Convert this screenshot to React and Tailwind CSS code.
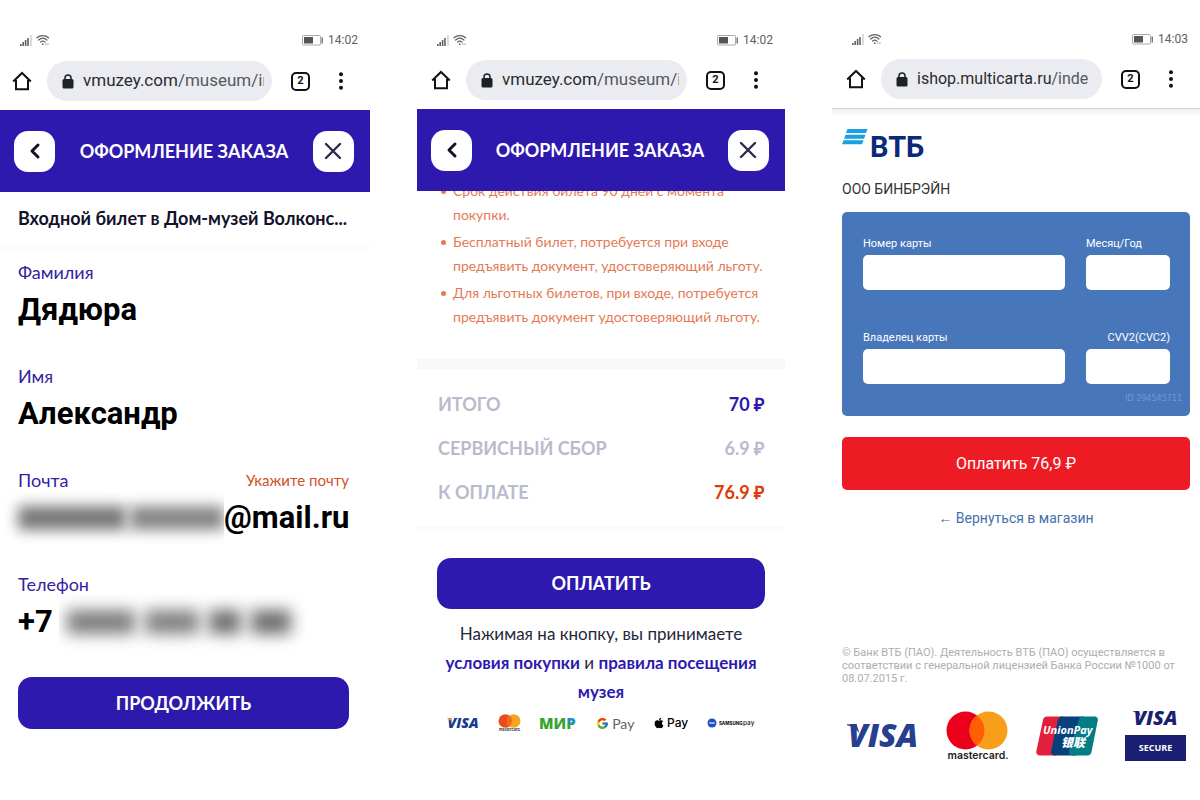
import { FaApple } from "react-icons/fa";
import { FcGoogle } from "react-icons/fc";

const museumFont = "font-['Lato','Open_Sans',sans-serif]";

/* ---------- browser chrome ---------- */

function StatusBar({ time }) {
  return (
    <div className="flex h-5 items-center justify-between pr-3 pl-5 text-[#5f6063]">
      <div className="flex items-center gap-1">
        <svg width="12" height="11" viewBox="0 0 12 11" fill="currentColor" aria-hidden="true">
          <rect x="0" y="9" width="1.6" height="2" />
          <rect x="2.400" y="7" width="1.6" height="4" />
          <rect x="4.800" y="5" width="1.6" height="6" />
          <rect x="7.200" y="3" width="1.6" height="8" />
          <rect x="10.500" y="0" width="1" height="11" opacity="0.45" />
        </svg>
        <svg width="14" height="12" viewBox="0 0 15 12" fill="none" stroke="currentColor" strokeWidth="1.3" strokeLinecap="round" aria-hidden="true">
          <path d="M1 3.600C4.500 0.400 10 0.400 13.500 3.600" />
          <path d="M2.800 6C5.500 3.600 9 3.600 11.700 6" />
          <path d="M4.800 8.300C6.200 7 8.300 7 9.700 8.300" />
          <circle cx="7.200" cy="10.500" r="0.900" fill="currentColor" stroke="none" />
          <path d="M10.500 10.300h.1M12.800 10.300h.1" />
        </svg>
      </div>
      <div className="flex items-center gap-1">
        <svg width="22" height="11" viewBox="0 0 22 11" aria-hidden="true">
          <rect x="0.500" y="0.500" width="18" height="9.500" rx="1" fill="none" stroke="#a9a9ab" />
          <rect x="2" y="2" width="9" height="6.500" fill="#555" />
          <rect x="19.500" y="2.500" width="1.500" height="6" fill="#777" />
        </svg>
        <span className="text-[12px]">{time}</span>
      </div>
    </div>
  );
}

function AddressBar({ host, path, className, textClass }) {
  return (
    <div className={`flex items-center pr-[27px] pb-[9px] ${className}`}>
      <button type="button" aria-label="Домой" className="shrink-0">
        <svg width="20" height="20" viewBox="0 0 20 20" fill="none" stroke="#111" strokeWidth="2" aria-hidden="true">
          <path d="M1.200 10.500 10 2l8.800 8.500M4 9v9.200h12V9" />
        </svg>
      </button>
      <div className="ml-[15px] flex h-10 min-w-0 flex-1 items-center gap-[9px] rounded-full bg-[#ebecf1] pr-2 pl-[15px]">
        <svg width="12" height="15" viewBox="0 0 12 15" className="shrink-0" aria-hidden="true">
          <path d="M3 6V4a3 3 0 0 1 6 0v2" fill="none" stroke="#202124" strokeWidth="1.500" />
          <rect x="0.500" y="5" width="11" height="9.500" rx="1.500" fill="#202124" />
        </svg>
        <span className={`min-w-0 flex-1 overflow-hidden whitespace-nowrap text-[#2a2b2e] ${textClass}`}>
          {host}
          <span className="text-[#56585c]">{path}</span>
        </span>
      </div>
      <button
        type="button"
        aria-label="Вкладки"
        className="ml-[19px] flex h-[19px] w-[19px] shrink-0 items-center justify-center rounded-[5px] border-2 border-[#111] text-[11px] font-bold text-[#111]"
      >
        2
      </button>
      <button type="button" aria-label="Меню" className="ml-[29px] shrink-0">
        <svg width="4" height="18" viewBox="0 0 4 18" fill="#111" aria-hidden="true">
          <circle cx="2" cy="2.200" r="2" />
          <circle cx="2" cy="9" r="2" />
          <circle cx="2" cy="15.800" r="2" />
        </svg>
      </button>
    </div>
  );
}

function OrderHeader() {
  return (
    <header className="flex h-[82px] items-center justify-between bg-[#2d19ad] pr-4 pl-[14px]">
      <button type="button" aria-label="Назад" className="flex h-[41px] w-[41px] items-center justify-center rounded-[14px] bg-white">
        <svg width="12" height="18" viewBox="0 0 12 18" fill="none" stroke="#12122b" strokeWidth="3" strokeLinecap="round" strokeLinejoin="round" aria-hidden="true">
          <path d="M9 3 3 9l6 6" />
        </svg>
      </button>
      <h1 className="text-[18px] font-bold text-white">ОФОРМЛЕНИЕ ЗАКАЗА</h1>
      <button type="button" aria-label="Закрыть" className="flex h-[41px] w-[41px] items-center justify-center rounded-[14px] bg-white">
        <svg width="18" height="18" viewBox="0 0 18 18" fill="none" stroke="#2b2b4b" strokeWidth="2.400" strokeLinecap="round" aria-hidden="true">
          <path d="M2 2l14 14M16 2 2 16" />
        </svg>
      </button>
    </header>
  );
}

/* ---------- payment logos ---------- */

function Visa({ width, height, fill, accent }) {
  return (
    <svg width={width} height={height} viewBox="0 0 72 24" role="img" aria-label="Visa">
      <text x="1" y="23" fontSize="32" fontWeight="800" fontStyle="italic" fill={fill} className="font-['Open_Sans',sans-serif]">
        VISA
      </text>
      <path d="M0 0.200h9.500l3 9C9 4.500 5 2 0 1.200Z" fill={accent || fill} />
    </svg>
  );
}

function Mastercard({ width, height, left, overlap, right }) {
  return (
    <svg width={width} height={height} viewBox="0 0 62 50" role="img" aria-label="Mastercard">
      <circle cx="19.500" cy="19.500" r="19" fill={left} />
      <circle cx="42.500" cy="19.500" r="19" fill={right} />
      <path d="M31 4.400a19 19 0 0 1 0 30.200a19 19 0 0 1 0-30.200Z" fill={overlap} />
      <text x="32" y="48" fontSize="10.500" fontWeight="600" textAnchor="middle" fill="#222" className="font-['Inter',sans-serif]">
        mastercard.
      </text>
    </svg>
  );
}

function Mir() {
  return (
    <svg width="38" height="14" viewBox="0 0 38 14" role="img" aria-label="Мир">
      <defs>
        <linearGradient id="mirTop" x1="0" x2="0" y1="0" y2="1">
          <stop offset="0.480" stopColor="#1c8fd0" />
          <stop offset="0.580" stopColor="#35a42f" />
        </linearGradient>
      </defs>
      <text x="0" y="12.500" fontSize="15" fontWeight="800" fill="#35a42f" className="font-['Open_Sans',sans-serif]">
        МИ
        <tspan fill="url(#mirTop)">Р</tspan>
      </text>
    </svg>
  );
}

function SamsungPay() {
  return (
    <svg width="49" height="10" viewBox="0 0 98 20" role="img" aria-label="Samsung Pay">
      <circle cx="10" cy="10" r="9" fill="#1f4fc4" />
      <path d="M4.600 8.400h10.800v3.200H4.600z" fill="#b9cbf5" />
      <text x="24" y="13" fontSize="9" fontWeight="800" fill="#222" className="font-['Inter',sans-serif]">
        SAMSUNG
      </text>
      <text x="72" y="13" fontSize="13" fontWeight="500" fill="#222" className="font-['Inter',sans-serif]">
        pay
      </text>
    </svg>
  );
}

function UnionPay() {
  return (
    <svg width="62" height="40" viewBox="0 0 62 40" role="img" aria-label="UnionPay">
      <path d="M11 0.500h16L20 39.500H4a3.500 3.500 0 0 1-3.600-4.500L7 4A4.500 4.500 0 0 1 11 .5Z" fill="#e2203c" />
      <path d="M26 .5h22L40 39.500H18.500a3.500 3.500 0 0 1-3.400-4.500L21.800 4A4.500 4.500 0 0 1 26 .5Z" fill="#07407c" />
      <path d="M47 .5h11.500a3.200 3.200 0 0 1 3.200 4.300L55.500 36a4.500 4.500 0 0 1-4 3.500H36a3.500 3.500 0 0 1-3-4.500L42.600 4A4.500 4.500 0 0 1 47 .5Z" fill="#027d83" />
      <text x="7" y="18" fontSize="11" fontWeight="700" fontStyle="italic" fill="#fff" className="font-['Open_Sans',sans-serif]">
        UnionPay
      </text>
      <text x="25" y="31" fontSize="12" fontWeight="900" fontStyle="italic" fill="#fff" className="font-['Noto_Sans_CJK_SC',sans-serif]">
        银联
      </text>
    </svg>
  );
}

function VtbLogo() {
  return (
    <svg width="84" height="34" viewBox="0 0 84 34" role="img" aria-label="ВТБ">
      <g fill="#1a9fe0">
        <path d="M5.500 1H25.500l-1.500 4H4z" />
        <path d="M3.500 6.700h20l-1.500 4H2z" />
        <path d="M1.500 12.300h20l-1.500 4H0z" />
      </g>
      <text x="28" y="29" fontSize="29" fontWeight="700" fill="#0b2a78" className="font-['Roboto',sans-serif]">
        ВТБ
      </text>
    </svg>
  );
}

/* ---------- screen 1: buyer details ---------- */

const inputStyle = "h-10 min-w-0 flex-1 bg-transparent font-['Roboto',sans-serif] text-[31px] font-bold text-black outline-none";

function Field({ id, label, error, children }) {
  return (
    <div>
      <div className="flex h-6 items-center justify-between">
        <label htmlFor={id} className="text-[18px] text-[#33229f]">{label}</label>
        {error && <span className="text-[15px] text-[#cf5325]">{error}</span>}
      </div>
      <div className="mt-[6px] flex h-10 items-center">{children}</div>
    </div>
  );
}

function DetailsScreen() {
  return (
    <section className="min-w-0">
      <div className="pt-[30px]">
        <StatusBar time="14:02" />
      </div>
      <AddressBar host="vmuzey.com" path="/museum/in" className="pt-[11px] pl-3" textClass="text-[17px]" />
      <div className={museumFont}>
        <OrderHeader />
        <h2 className="flex h-[52px] items-center px-[18px] text-[18px] font-bold text-[#12122b]">
          Входной билет в Дом-музей Волконс...
        </h2>
        <div className="h-[6px] bg-[#fcfcfc]" />
        <form className="pt-[10px] pr-[21px] pl-[18px]">
          <div className="flex flex-col gap-[34px]">
            <Field id="surname" label="Фамилия">
              <input id="surname" defaultValue="Дядюра" className={inputStyle} />
            </Field>
            <Field id="name" label="Имя">
              <input id="name" defaultValue="Александр" className={inputStyle} />
            </Field>
            <Field id="email" label="Почта" error="Укажите почту">
              {/* hidden part of the address */}
              <div className="-ml-4 flex h-14 w-[222px] shrink-0 items-center gap-1 overflow-hidden pl-4" aria-hidden="true">
                <span className="h-6 w-[114px] bg-[#777] blur-[7px]" />
                <span className="h-6 w-[100px] bg-[#858585] blur-[7px]" />
              </div>
              <input id="email" defaultValue="@mail.ru" className={inputStyle} />
            </Field>
            <Field id="phone" label="Телефон">
              <input id="phone" defaultValue="+7" className="h-10 w-[41px] bg-transparent font-['Roboto',sans-serif] text-[31px] font-bold text-black outline-none" />
              <div className="flex h-14 items-center gap-[10px] overflow-hidden pr-4 pl-2" aria-hidden="true">
                <span className="h-6 w-[68px] bg-[#7c7c7c] blur-[8px]" />
                <span className="h-6 w-[54px] bg-[#808080] blur-[8px]" />
                <span className="h-6 w-[32px] bg-[#6c6c6c] blur-[8px]" />
                <span className="h-6 w-[40px] bg-[#6c6c6c] blur-[8px]" />
              </div>
            </Field>
          </div>
          <button type="button" className="mt-[35px] h-[52px] w-full rounded-[14px] bg-[#2d19ad] text-[18px] font-bold text-white">
            ПРОДОЛЖИТЬ
          </button>
        </form>
      </div>
    </section>
  );
}

/* ---------- screen 2: order total ---------- */

const rules = [
  "Срок действия билета 90 дней с момента покупки.",
  "Бесплатный билет, потребуется при входе предъявить документ, удостоверяющий льготу.",
  "Для льготных билетов, при входе, потребуется предъявить документ удостоверяющий льготу.",
];

const totals = [
  { label: "ИТОГО", value: "70 ₽", color: "text-[#2d19ad]" },
  { label: "СЕРВИСНЫЙ СБОР", value: "6.9 ₽", color: "text-[#b9bbcd]" },
  { label: "К ОПЛАТЕ", value: "76.9 ₽", color: "text-[#dc3a07]" },
];

function TotalScreen() {
  return (
    <section className="min-w-0">
      <div className="pt-[30px]">
        <StatusBar time="14:02" />
      </div>
      <AddressBar host="vmuzey.com" path="/museum/in" className="pt-[10px] pl-[14px]" textClass="text-[17px]" />
      <div className={museumFont}>
        <OrderHeader />
        <div className="overflow-hidden pb-[30px]">
          <ul className="-mt-3 flex flex-col gap-[3px] pr-[18px] pl-6 text-[14px] leading-6 text-[#e47a55]">
            {rules.map((rule) => (
              <li key={rule} className="flex gap-[7px]">
                <span className="mt-[10px] h-[5px] w-[5px] shrink-0 rounded-full bg-[#e47a55]" />
                <span>{rule}</span>
              </li>
            ))}
          </ul>
        </div>
        <div className="h-[10px] bg-[#f9f9f9]" />
        <dl className="px-[21px] pt-[13px] pb-3 text-[18px] font-bold">
          {totals.map(({ label, value, color }) => (
            <div key={label} className="flex h-11 items-center justify-between">
              <dt className="text-[#b9bbcd]">{label}</dt>
              <dd className={color}>{value}</dd>
            </div>
          ))}
        </dl>
        <div className="h-[5px] bg-[#fbfbfb]" />
        <div className="px-5 pt-[27px] text-center">
          <button type="button" className="h-[51px] w-full rounded-[14px] bg-[#2d19ad] text-[18px] font-bold text-white">
            ОПЛАТИТЬ
          </button>
          <p className="mt-[10px] text-[17px] leading-[29px] text-[#26263c]">
            Нажимая на кнопку, вы принимаете{" "}
            <a href="#terms" className="font-bold text-[#2d19ad]">условия покупки</a> и{" "}
            <a href="#rules" className="font-bold text-[#2d19ad]">правила посещения музея</a>
          </p>
        </div>
        <div className="mt-[7px] flex h-[20px] items-center justify-between pr-[29px] pl-[30px]">
          <Visa width="32" height="11" fill="#153a8f" accent="#f0a32a" />
          <Mastercard width="23" height="18" left="#ea4b1d" overlap="#f06a1c" right="#f7a422" />
          <Mir />
          <span className="flex items-center gap-[3px] text-[14px] text-[#5f6368]">
            <FcGoogle size={13} aria-label="Google" />
            Pay
          </span>
          <span className="flex items-center gap-[2px] font-['Inter',sans-serif] text-[12px] font-medium text-black">
            <FaApple size={12} aria-label="Apple" />
            Pay
          </span>
          <SamsungPay />
        </div>
      </div>
    </section>
  );
}

/* ---------- screen 3: bank card form ---------- */

function CardInput({ id, label, labelClass }) {
  return (
    <div className="flex min-w-0 flex-col">
      <label htmlFor={id} className={`h-[21px] text-[11px] leading-[19px] text-white ${labelClass || ""}`}>{label}</label>
      <input id={id} className="h-[35px] w-full rounded-[5px] bg-white px-2 text-sm outline-none" />
    </div>
  );
}

function BankScreen() {
  return (
    <section className="min-w-0">
      <div className="pt-[29px]">
        <StatusBar time="14:03" />
      </div>
      <AddressBar host="ishop.multicarta.ru" path="/inde" className="pt-[10px] pl-[14px]" textClass="text-[16px]" />
      <div className="h-2 border-t border-[#d5d5d5] bg-linear-to-b from-[#efefef] to-white" />
      <div className="px-[10px] pt-3">
        <VtbLogo />
        <p className="mt-[15px] text-[14px] leading-6 text-[#333]">ООО БИНБРЭЙН</p>
        <form className="mt-[11px]">
          <div className="rounded-[5px] bg-[#4776ba] pt-[22px] pr-5 pb-[9px] pl-[21px]">
            <div className="grid grid-cols-[202fr_84fr] gap-x-[21px] gap-y-[38px]">
              <CardInput id="card-number" label="Номер карты" />
              <CardInput id="card-date" label="Месяц/Год" />
              <CardInput id="card-owner" label="Владелец карты" />
              <CardInput id="card-cvv" label="CVV2(CVC2)" labelClass="text-right" />
            </div>
            <p className="-mr-3 mt-[7px] text-right font-['DejaVu_Sans',sans-serif] text-[8px] leading-[16px] text-[#7398d0]">ID 294545711</p>
          </div>
          <button type="button" className="mt-[21px] h-[53px] w-full rounded-[5px] bg-[#ed1c24] text-[16px] text-white">
            Оплатить 76,9 ₽
          </button>
        </form>
        <p className="mt-4 text-center text-[14px] leading-6">
          <a href="#shop" className="text-[#4470ab]">← Вернуться в магазин</a>
        </p>
        <p className="mt-[116px] text-[11px] leading-[13px] text-[#adadad]">
          © Банк ВТБ (ПАО). Деятельность ВТБ (ПАО) осуществляется в соответствии с генеральной лицензией Банка России №1000 от 08.07.2015 г.
        </p>
        <div className="mt-[25px] flex h-[51px] items-center justify-between pr-1 pl-[5px]">
          <Visa width="72" height="24" fill="#26408f" />
          <Mastercard width="62" height="50" left="#eb001b" overlap="#ff5f00" right="#f79e1b" />
          <UnionPay />
          <div className="flex flex-col items-center gap-[9px]">
            <Visa width="45" height="15" fill="#1a1f71" />
            <span className="flex h-[26px] w-[61px] items-center justify-center bg-[#1a1f71] font-['Open_Sans',sans-serif] text-[9px] font-bold text-white">
              SECURE
            </span>
          </div>
        </div>
      </div>
    </section>
  );
}

export default function App() {
  return (
    <main className="grid min-h-screen grid-cols-[370fr_368fr_368fr] gap-[47px] bg-white font-['Roboto',sans-serif]">
      <DetailsScreen />
      <TotalScreen />
      <BankScreen />
    </main>
  );
}
